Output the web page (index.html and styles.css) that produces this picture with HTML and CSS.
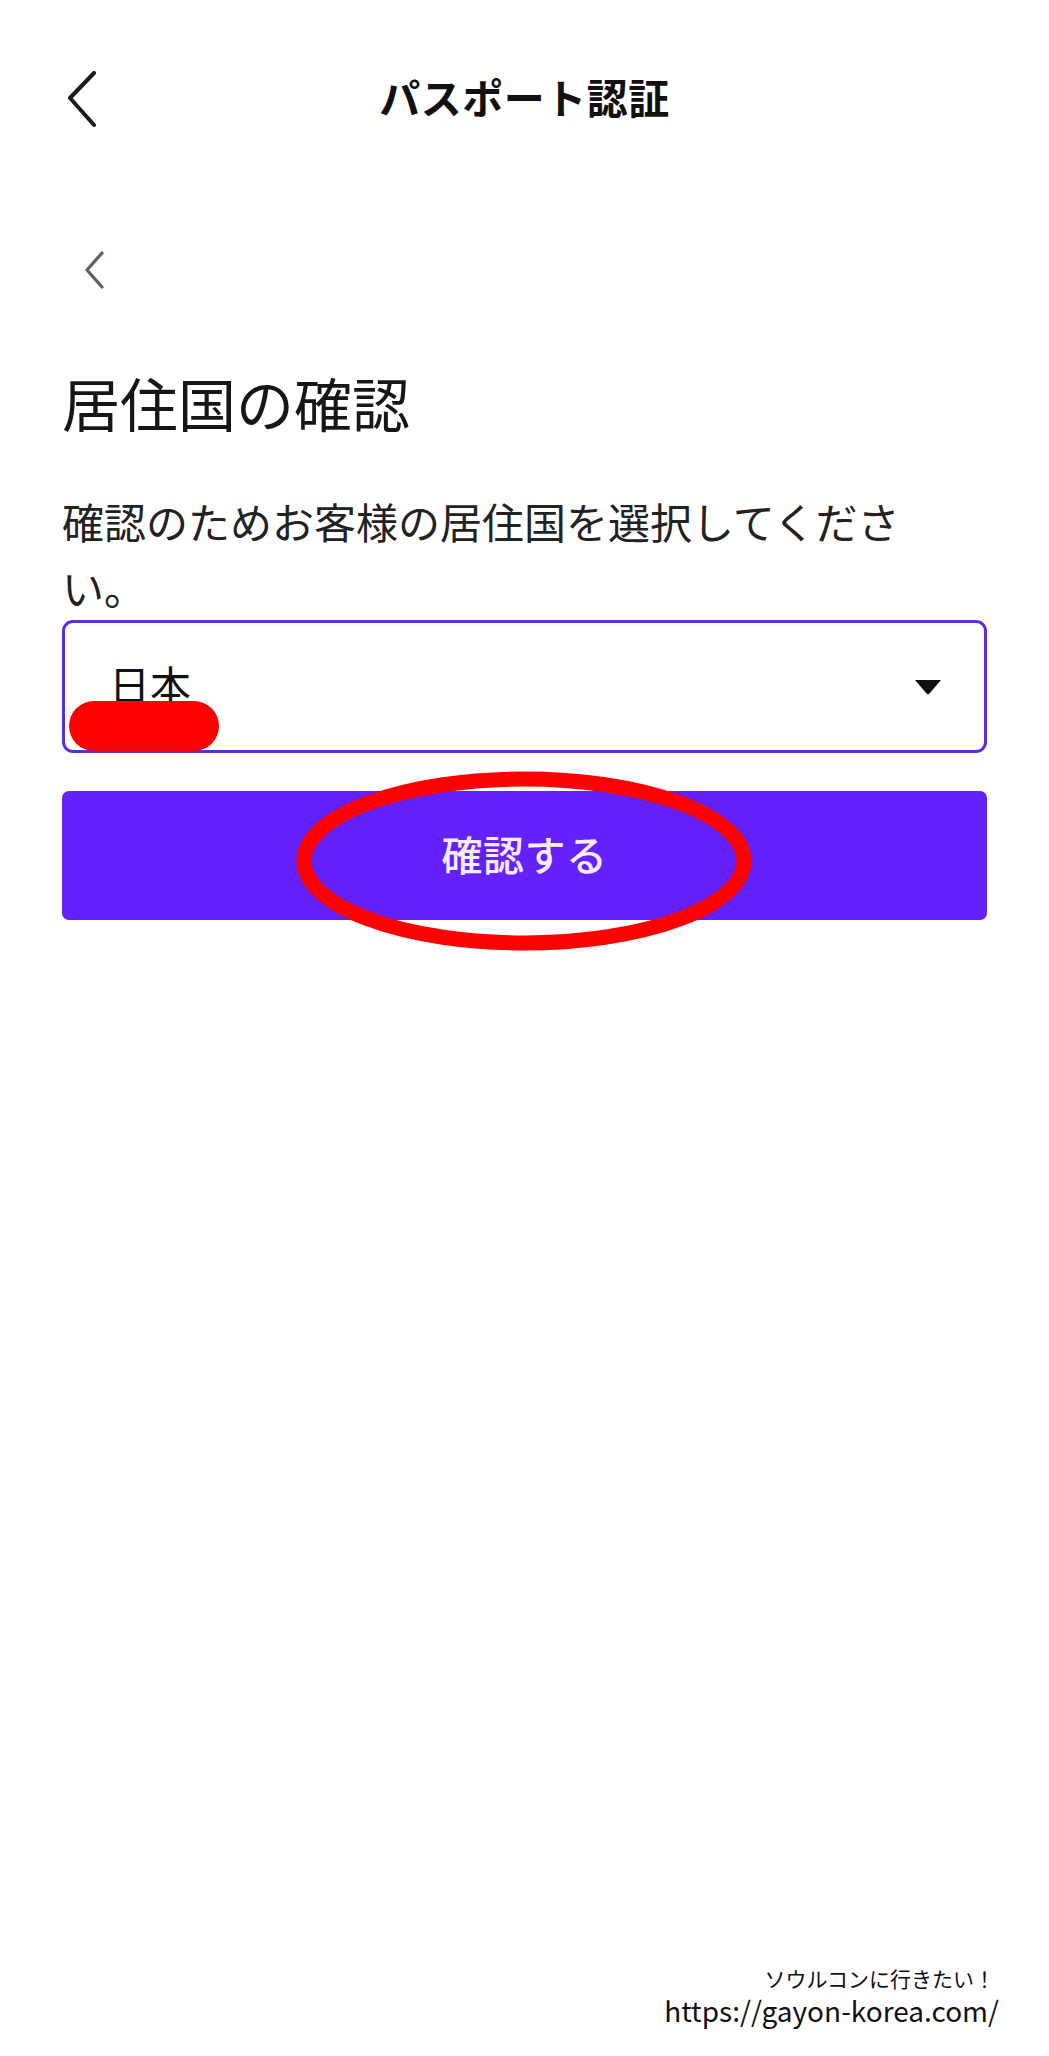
FILE: index.html
```html
<!DOCTYPE html>
<html lang="ja">
<head>
<meta charset="utf-8">
<title>パスポート認証</title>
<link rel="stylesheet" href="styles.css">
</head>
<body>
<div class="page">
  <header class="topbar">
    <div class="topbar-left">
      <svg class="back-icon" width="32" height="58" viewBox="0 0 32 58" aria-hidden="true">
        <polyline points="27,2 3,27 27,54" fill="none" stroke="#1c1c1c" stroke-width="4" stroke-linecap="round" stroke-linejoin="round"/>
      </svg>
    </div>
    <h1 class="topbar-title">パスポート認証</h1>
    <div class="topbar-right"></div>
  </header>

  <main class="content">
    <div class="subback">
      <svg class="subback-icon" width="22" height="40" viewBox="0 0 22 40" aria-hidden="true">
        <polyline points="18,3 3,20 18,37" fill="none" stroke="#5e5e72" stroke-width="3.2" stroke-linecap="round" stroke-linejoin="round"/>
      </svg>
    </div>

    <h2 class="heading">居住国の確認</h2>
    <p class="desc">確認のためお客様の居住国を選択してください。</p>

    <div class="select">
      <span class="select-value">日本</span>
      <svg class="select-caret" width="28" height="16" viewBox="0 0 28 16" aria-hidden="true">
        <path d="M1 1 H27 L15.5 14.5 Q14 16 12.5 14.5 Z" fill="#111"/>
      </svg>
      <span class="redact"></span>
    </div>

    <div class="btn-wrap">
      <button class="confirm-btn" type="button">確認する</button>
      <svg class="annot-ellipse" width="460" height="184" viewBox="0 0 460 184" aria-hidden="true">
        <ellipse cx="230" cy="92" rx="220" ry="82" fill="none" stroke="#ff0000" stroke-width="15"/>
      </svg>
    </div>
  </main>

  <footer class="watermark">
    <div class="wm-jp">ソウルコンに行きたい！</div>
    <div class="wm-url">https://gayon-korea.com/</div>
  </footer>
</div>
</body>
</html>
```

FILE: styles.css
```css
* { box-sizing: border-box; }

html, body {
  margin: 0;
  padding: 0;
  background: #ffffff;
}

body {
  font-family: "Noto Sans CJK JP", "Noto Sans", sans-serif;
  color: #1a1a1a;
}

.page {
  width: 1049px;
  min-height: 2056px;
  display: flex;
  flex-direction: column;
}

/* Top bar */
.topbar {
  height: 200px;
  display: grid;
  grid-template-columns: 1fr auto 1fr;
  align-items: center;
}

.topbar-left {
  padding-left: 67px;
  display: flex;
  align-items: center;
}

.back-icon { display: block; }

.topbar-title {
  margin: 0 0 8px 0;
  font-size: 41px;
  font-weight: 700;
  line-height: 60px;
  color: #111;
  letter-spacing: 0.5px;
}

/* Content */
.content {
  padding: 0 62px;
  display: flex;
  flex-direction: column;
}

.subback {
  height: 76px;
  padding-left: 22px;
  display: flex;
  align-items: center;
  margin-top: 32px;
}

.subback-icon { display: block; }

.heading {
  margin: 54px 0 0 0;
  font-size: 58px;
  font-weight: 400;
  line-height: 80px;
  color: #161616;
}

.desc {
  margin: 46px 0 0 0;
  font-size: 42px;
  font-weight: 400;
  line-height: 66px;
  color: #222;
  padding-right: 60px;
}

/* Select box */
.select {
  position: relative;
  height: 133px;
  border: 3.5px solid #5b2de2;
  border-radius: 11px;
  background: #fff;
  display: flex;
  align-items: center;
  justify-content: space-between;
  padding: 0 42px 0 44px;
  margin-top: 0;
}

.select-value {
  font-size: 41px;
  line-height: 60px;
  color: #111;
  margin-top: -8px;
}

.select-caret { display: block; }

.redact {
  position: absolute;
  left: 4px;
  top: 78px;
  width: 150px;
  height: 50px;
  border-radius: 25px;
  background: #ff0000;
}

/* Button */
.btn-wrap {
  position: relative;
  margin-top: 38px;
}

.confirm-btn {
  display: block;
  width: 100%;
  height: 129px;
  border: none;
  border-radius: 7px;
  background: #6421fb;
  color: #f3ecff;
  font-family: "Noto Sans CJK JP", "Noto Sans", sans-serif;
  font-size: 41px;
  font-weight: 500;
  letter-spacing: 0.5px;
  padding: 0 0 6px 0;
}

.annot-ellipse {
  position: absolute;
  left: 232px;
  top: -22px;
  pointer-events: none;
}

/* Watermark */
.watermark {
  margin-top: auto;
  padding: 0 50px 29px 0;
  text-align: right;
  color: #111;
  font-family: "Noto Sans CJK JP", "Noto Sans", sans-serif;
}

.wm-jp {
  font-size: 21px;
  line-height: 31px;
  padding-right: 4px;
}

.wm-url {
  font-size: 28px;
  line-height: 33px;
}
```
